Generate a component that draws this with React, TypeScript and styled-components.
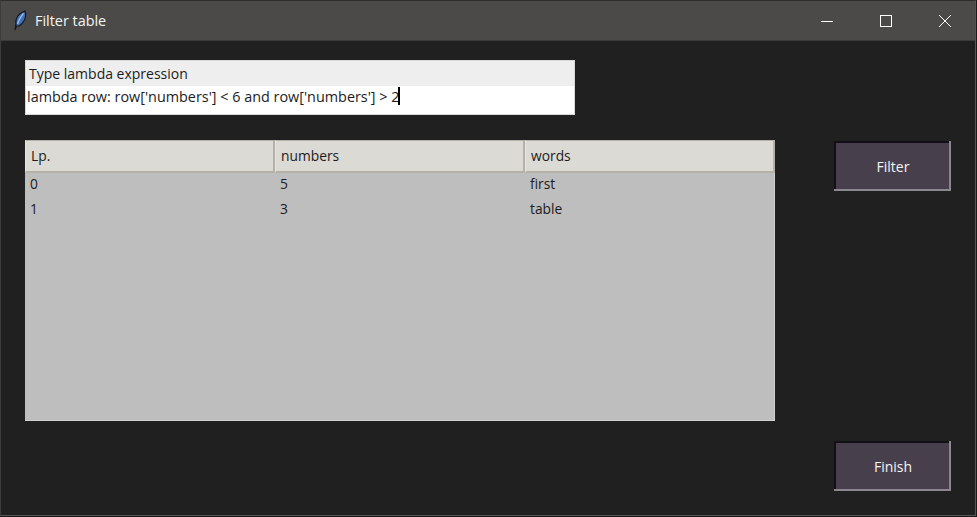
import React from 'react'
import styled, { createGlobalStyle } from 'styled-components'

const GlobalStyle = createGlobalStyle`
  html, body {
    margin: 0;
    padding: 0;
    background: #1a1a1a;
  }
`

const Window = styled.div`
  box-sizing: border-box;
  width: 976px;
  height: 516px;
  border-top: 1px solid #2e2e2e;
  border-left: 1px solid #3c3c3c;
  border-right: 1px solid #555;
  border-bottom: 1px solid #555;
  background: #202020;
  display: flex;
  flex-direction: column;
  font-family: 'Open Sans', 'Noto Sans', sans-serif;
  font-size: 13.8px;
`

const TitleBar = styled.div`
  height: 40px;
  flex: none;
  box-sizing: border-box;
  border-bottom: 1px solid #3a3a38;
  background: #4b4a48;
  display: flex;
  align-items: center;
  padding: 0 1px 0 12px;
  color: #f4f4f4;
  font-size: 14.4px;
`

const TitleText = styled.span`
  margin-left: 8px;
  flex: 1;
`

const WinButton = styled.div`
  width: 59px;
  height: 39px;
  display: flex;
  align-items: center;
  justify-content: center;
`

const Content = styled.div`
  flex: 1;
  display: flex;
  padding: 19px 0 0 24px;
`

const LeftColumn = styled.div`
  width: 750px;
  display: flex;
  flex-direction: column;
  gap: 25px;
`

const Prompt = styled.div`
  box-sizing: border-box;
  width: 550px;
  height: 55px;
  display: flex;
  flex-direction: column;
  border: 1px solid #d8d8d8;
`

const PromptLabel = styled.div`
  height: 25px;
  background: #eeeeee;
  color: #1c1c1c;
  padding: 0 3px;
  font-size: 14px;
  line-height: 26px;
`

const PromptInput = styled.div`
  flex: 1;
  background: #ffffff;
  color: #1c1c1c;
  padding: 0 1px;
  font-size: 14.4px;
  line-height: 21px;
  display: flex;
  align-items: flex-start;
`

const Caret = styled.span`
  width: 2px;
  height: 18px;
  margin: 1px 0 0 -2px;
  background: #000;
`

const Table = styled.div`
  height: 281px;
  background: #bebebe;
  box-shadow: inset -1px -1px 0 #d0d0d0;
  color: #1c1c1c;
`

const HeaderRow = styled.div`
  display: grid;
  grid-template-columns: repeat(3, 250px);
  height: 31px;
`

const HeaderCell = styled.div`
  box-sizing: border-box;
  background: #dcdad5;
  border: 1px solid #b5b1a8;
  border-left-color: #e6e4e0;
  border-bottom-width: 2px;
  border-right-width: 2px;
  padding-left: 5px;
  line-height: 30px;
`

const Row = styled.div`
  display: grid;
  grid-template-columns: repeat(3, 250px);
  height: 25px;
  line-height: 25px;
`

const Cell = styled.div`
  padding-left: 5px;
`

const RightColumn = styled.div`
  flex: 1;
  display: flex;
  flex-direction: column;
  align-items: flex-start;
  padding: 81px 0 0 59px;
  gap: 250px;
`

const ActionButton = styled.button`
  box-sizing: border-box;
  width: 117px;
  height: 50px;
  padding: 2px 0 0 3px;
  background: #483f4d;
  color: #f4f4f4;
  font: inherit;
  font-size: 14px;
  border: none;
  border-right: 2px solid #8b8790;
  border-bottom: 2px solid #8b8790;
  box-shadow: inset 2px 2px 0 #111016;
`

const rows = [
  ['0', '5', 'first'],
  ['1', '3', 'table'],
]

const App = () => {
  return (
    <>
      <GlobalStyle />
      <Window>
        <TitleBar>
          <svg width="14" height="22" viewBox="0 0 14 22">
            <path d="M2 20 L3 14 C2 8 6 3 12 1 C14 7 11 13 6 16 L3.5 16 Z" fill="#3f70b8" stroke="#14161a" strokeWidth="1.2" />
            <path d="M4.5 14 C6 10 8 6 10.5 3.5" stroke="#a4c6ee" strokeWidth="1.2" fill="none" />
          </svg>
          <TitleText>Filter table</TitleText>
          <WinButton>
            <svg width="12" height="12" viewBox="0 0 12 12">
              <path d="M0 6.5 H12" stroke="#fff" strokeWidth="1" />
            </svg>
          </WinButton>
          <WinButton>
            <svg width="12" height="12" viewBox="0 0 12 12">
              <rect x="0.5" y="0.5" width="11" height="11" fill="none" stroke="#fff" strokeWidth="1" />
            </svg>
          </WinButton>
          <WinButton>
            <svg width="12" height="12" viewBox="0 0 12 12">
              <path d="M0 0 L12 12 M12 0 L0 12" stroke="#fff" strokeWidth="1" />
            </svg>
          </WinButton>
        </TitleBar>
        <Content>
          <LeftColumn>
            <Prompt>
              <PromptLabel>Type lambda expression</PromptLabel>
              <PromptInput>
                lambda row: row['numbers'] &lt; 6 and row['numbers'] &gt; 2
                <Caret />
              </PromptInput>
            </Prompt>
            <Table>
              <HeaderRow>
                <HeaderCell>Lp.</HeaderCell>
                <HeaderCell>numbers</HeaderCell>
                <HeaderCell>words</HeaderCell>
              </HeaderRow>
              {rows.map((row) => (
                <Row key={row[0]}>
                  {row.map((value) => (
                    <Cell key={value}>{value}</Cell>
                  ))}
                </Row>
              ))}
            </Table>
          </LeftColumn>
          <RightColumn>
            <ActionButton>Filter</ActionButton>
            <ActionButton>Finish</ActionButton>
          </RightColumn>
        </Content>
      </Window>
    </>
  )
}

export default App
